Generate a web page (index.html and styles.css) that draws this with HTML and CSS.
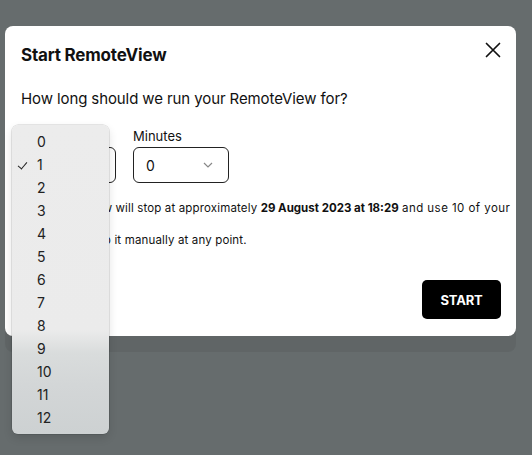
FILE: index.html
```html
<!DOCTYPE html>
<html>
<head>
<meta charset="utf-8">
<link rel="stylesheet" href="styles.css">
</head>
<body>
<div class="modal">
  <div class="header">
    <h1 class="title">Start RemoteView</h1>
    <svg class="close" width="16" height="16" viewBox="0 0 16 16"><path d="M1.5 1.5L14.5 14.5M14.5 1.5L1.5 14.5" stroke="#111" stroke-width="1.7" stroke-linecap="round"/></svg>
  </div>
  <p class="question">How long should we run your RemoteView for?</p>
  <div class="fields">
    <div class="field">
      <label class="label">Hours</label>
      <div class="select"><span>1</span><svg width="10" height="6" viewBox="0 0 10 6"><path d="M1 1L5 5L9 1" fill="none" stroke="#888" stroke-width="1.2"/></svg></div>
    </div>
    <div class="field">
      <label class="label">Minutes</label>
      <div class="select"><span>0</span><svg width="10" height="6" viewBox="0 0 10 6"><path d="M1 1L5 5L9 1" fill="none" stroke="#888" stroke-width="1.2"/></svg></div>
    </div>
  </div>
  <p class="info">The <span class="product">RemoteView</span> will stop at approximately <b>29 August 2023 at 18:29</b> <span class="tail">and use 10 of your</span> hr. You can stop it manually at any point.</p>
  <div class="actions"><button class="start">START</button></div>
</div>
<ul class="menu">
  <li>0</li>
  <li class="checked">1</li>
  <li>2</li>
  <li>3</li>
  <li>4</li>
  <li>5</li>
  <li>6</li>
  <li>7</li>
  <li>8</li>
  <li>9</li>
  <li>10</li>
  <li>11</li>
  <li>12</li>
</ul>
</body>
</html>
```
FILE: styles.css
```css
html, body {
  margin: 0;
  padding: 0;
}
body {
  background: #666c6d;
  width: 532px;
  height: 455px;
  overflow: hidden;
  font-family: Inter, "Noto Sans", sans-serif;
  color: #111;
  position: relative;
  padding-top: 26px;
  box-sizing: border-box;
}
.modal {
  width: 511px;
  height: 310px;
  margin-left: 5px;
  background: #fff;
  border-radius: 8px;
  padding: 0 15px 0 16px;
  box-sizing: border-box;
  box-shadow: 0 16px 0 rgba(0,0,0,0.06);
  display: flex;
  flex-direction: column;
}
.header {
  display: flex;
  justify-content: space-between;
  align-items: flex-start;
  padding-top: 18px;
  height: 22px;
}
.title {
  margin: 0;
  font-size: 17px;
  font-weight: 700;
  letter-spacing: -0.2px;
  line-height: 22px;
}
.close {
  margin-top: -2px;
}
.question {
  margin: 23px 0 0;
  font-size: 15px;
  line-height: 20px;
  letter-spacing: -0.1px;
}
.fields {
  display: flex;
  gap: 17px;
  margin-top: 19px;
}
.field {
  display: flex;
  flex-direction: column;
}
.label {
  font-size: 13px;
  line-height: 16px;
}
.select {
  width: 96px;
  height: 36px;
  box-sizing: border-box;
  border: 1px solid #222;
  border-radius: 6px;
  margin-top: 3px;
  display: flex;
  align-items: center;
  justify-content: space-between;
  padding: 0 15px 0 12px;
  font-size: 14px;
}
.field:first-child .select {
  margin-left: -1px;
}
.info {
  margin: 9px 0 0;
  font-size: 11.5px;
  line-height: 32px;
  letter-spacing: 0.15px;
  width: 490px;
}
.info .product {
  letter-spacing: -0.1px;
}
.info .tail {
  letter-spacing: 0.45px;
}
.info b {
  font-weight: 700;
  letter-spacing: 0;
}
.actions {
  display: flex;
  justify-content: flex-end;
  margin-top: 24px;
}
.start {
  width: 79px;
  height: 39px;
  background: #000;
  color: #fff;
  border: 0;
  border-radius: 5px;
  font-family: Inter, sans-serif;
  font-weight: 700;
  font-size: 13px;
  letter-spacing: -0.2px;
}
.menu {
  position: absolute;
  z-index: 10;
  left: 12px;
  top: 125px;
  width: 97px;
  height: 309px;
  box-sizing: border-box;
  margin: 0;
  padding: 5px 0;
  list-style: none;
  border-radius: 6px;
  background: linear-gradient(to bottom, #ececec 0, #ebebeb 205px, #d9dcdc 228px, #d3d6d7 260px, #cdd1d2 309px);
  box-shadow: 0 0 0 0.5px rgba(0,0,0,0.18), 0 4px 10px rgba(0,0,0,0.12);
  font-family: Inter, "Noto Sans", sans-serif;
  font-size: 14px;
  color: #222;
}
.menu li {
  height: 23px;
  line-height: 23px;
  padding-left: 25px;
  position: relative;
}
.menu li.checked::before {
  content: "";
  position: absolute;
  left: 8px;
  top: 7px;
  width: 4px;
  height: 8px;
  border: solid #222;
  border-width: 0 1.6px 1.6px 0;
  transform: rotate(40deg);
}
```
